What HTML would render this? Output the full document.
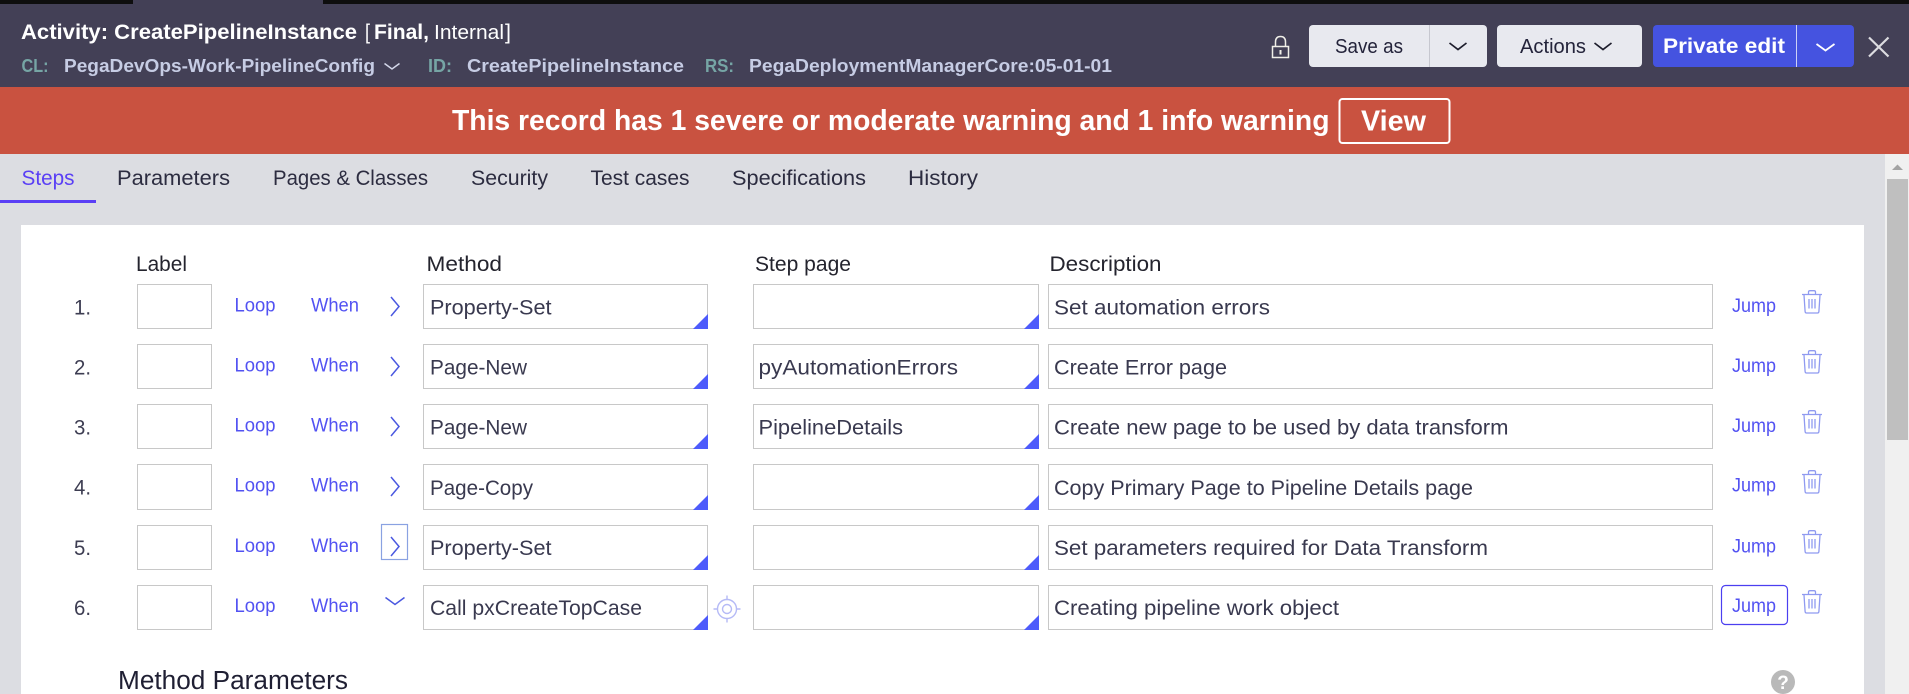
<!DOCTYPE html>
<html lang="en">
<head>
<meta charset="utf-8">
<title>Activity: CreatePipelineInstance</title>
<style>
html,body{margin:0;padding:0;width:1909px;height:694px;overflow:hidden;background:#dcdde2}
svg{display:block}
text{font-family:"Liberation Sans",sans-serif;white-space:pre}
.th{font-size:21px;font-weight:700;fill:#fff}
.sub{font-size:18px;font-weight:700;fill:#c6cce4}
.cl{font-size:18px;font-weight:700;fill:#76a5a5}
.btn{font-size:20.5px;fill:#23233a}
.tab{font-size:21.5px;fill:#2c2c40}
.hd{font-size:21px;fill:#24242e}
.num{font-size:21px;fill:#3d3d52}
.lnk{font-size:19px;fill:#5252f2}
.val{font-size:21px;fill:#39394f}
.box{fill:#fff;stroke:#c8c8c8;stroke-width:1}
.ch{fill:none;stroke:#4a58e0;stroke-width:1.5}
.tr{fill:none;stroke:#8f9af0;stroke-width:1.3}
</style>
</head>
<body>
<svg xmlns="http://www.w3.org/2000/svg" width="1909" height="694" viewBox="0 0 1909 694">
<defs>
<g id="tri"><path d="M0 15 L15 15 L15 0 Z" fill="#4d5bfb"/></g>
<g id="trash" class="tr">
<path d="M0.5 4.5 H20.5 M7 4 V2 Q7 0.7 8.5 0.7 H12.5 Q14 0.7 14 2 V4"/>
<path d="M2.5 5 L3.6 21.5 Q3.7 23 5 23 H16 Q17.3 23 17.4 21.5 L18.5 5"/>
<path d="M7.5 9 V18.5 M10.5 9 V18.5 M13.5 9 V18.5"/>
</g>
</defs>

<!-- top strip -->
<rect x="0" y="0" width="1909" height="87" fill="#434056"/>
<rect x="0" y="0" width="133" height="4" fill="#0e0e0e"/>
<rect x="323" y="0" width="1586" height="4" fill="#0e0e0e"/>

<!-- title -->
<text class="th" x="21" y="39" textLength="336" lengthAdjust="spacingAndGlyphs">Activity: CreatePipelineInstance</text>
<text x="365" y="39" font-size="21" fill="#fff" textLength="5" lengthAdjust="spacingAndGlyphs">[</text>
<text class="th" x="374" y="39" textLength="55" lengthAdjust="spacingAndGlyphs">Final,</text>
<text x="434" y="39" font-size="20" fill="#fff" textLength="70" lengthAdjust="spacingAndGlyphs">Internal</text>
<text x="505" y="39" font-size="21" fill="#fff" textLength="6" lengthAdjust="spacingAndGlyphs">]</text>

<text class="cl" x="21.5" y="72" textLength="27" lengthAdjust="spacingAndGlyphs">CL:</text>
<text class="sub" x="64" y="72" textLength="311" lengthAdjust="spacingAndGlyphs">PegaDevOps-Work-PipelineConfig</text>
<path d="M384.5 63.5 L392 69 L399.5 63.5" fill="none" stroke="#d4d8ea" stroke-width="1.5"/>
<text class="cl" x="428" y="72" textLength="24" lengthAdjust="spacingAndGlyphs">ID:</text>
<text class="sub" x="467" y="72" textLength="217" lengthAdjust="spacingAndGlyphs">CreatePipelineInstance</text>
<text class="cl" x="705" y="72" textLength="29" lengthAdjust="spacingAndGlyphs">RS:</text>
<text class="sub" x="749" y="72" textLength="363" lengthAdjust="spacingAndGlyphs">PegaDeploymentManagerCore:05-01-01</text>

<!-- lock -->
<rect x="1272.5" y="46.5" width="16" height="11" fill="none" stroke="#f0efe8" stroke-width="1.5"/>
<path d="M1275.5 46 V42 Q1275.5 36.5 1280.5 36.5 Q1285.5 36.5 1285.5 42 V46" fill="none" stroke="#f0efe8" stroke-width="1.5"/>
<rect x="1279.5" y="50" width="2" height="4.5" fill="#f0efe8"/>

<!-- buttons -->
<rect x="1309" y="25" width="178" height="42" rx="4" fill="#e8e9ef"/>
<rect x="1429" y="25" width="1" height="42" fill="#c6c7cf"/>
<text class="btn" x="1335" y="53" textLength="68" lengthAdjust="spacingAndGlyphs">Save as</text>
<path d="M1449.5 43 L1458 49.5 L1466.5 43" fill="none" stroke="#1d1d2c" stroke-width="1.7"/>
<rect x="1497" y="25" width="145" height="42" rx="4" fill="#e8e9ef"/>
<text class="btn" x="1520" y="53" textLength="66" lengthAdjust="spacingAndGlyphs">Actions</text>
<path d="M1594.5 43 L1603 49.5 L1611.5 43" fill="none" stroke="#1d1d2c" stroke-width="1.7"/>
<rect x="1653" y="25" width="201" height="42" rx="4" fill="#4553e0"/>
<rect x="1796" y="25" width="1" height="42" fill="#cdd1f5"/>
<text x="1663" y="53" font-size="21.5" font-weight="700" fill="#fff" textLength="122" lengthAdjust="spacingAndGlyphs">Private edit</text>
<path d="M1816.5 44 L1825.5 50.5 L1834.5 44" fill="none" stroke="#fff" stroke-width="1.8"/>
<path d="M1869 37.5 L1888.5 56.5 M1888.5 37.5 L1869 56.5" fill="none" stroke="#dcdce0" stroke-width="2.2"/>

<!-- warning -->
<rect x="0" y="87" width="1909" height="67" fill="#c95240"/>
<rect x="0" y="154" width="1909" height="540" fill="#dcdde2"/>
<text x="452" y="130" font-size="28.5" font-weight="700" fill="#fff" textLength="877.5" lengthAdjust="spacingAndGlyphs">This record has 1 severe or moderate warning and 1 info warning</text>
<rect x="1339.5" y="99" width="110" height="44" rx="3" fill="none" stroke="#fff" stroke-width="2"/>
<text x="1361" y="130.5" font-size="28.5" font-weight="700" fill="#fff" textLength="65" lengthAdjust="spacingAndGlyphs">View</text>

<!-- tabs -->
<text class="tab" x="21.5" y="185" style="fill:#5a3ff5" textLength="53" lengthAdjust="spacingAndGlyphs">Steps</text>
<rect x="0" y="200" width="96" height="3" fill="#5a3ff5"/>
<text class="tab" x="117" y="185" textLength="113" lengthAdjust="spacingAndGlyphs">Parameters</text>
<text class="tab" x="273" y="185" textLength="155" lengthAdjust="spacingAndGlyphs">Pages &amp; Classes</text>
<text class="tab" x="471" y="185" textLength="77" lengthAdjust="spacingAndGlyphs">Security</text>
<text class="tab" x="590.5" y="185" textLength="99" lengthAdjust="spacingAndGlyphs">Test cases</text>
<text class="tab" x="732" y="185" textLength="134" lengthAdjust="spacingAndGlyphs">Specifications</text>
<text class="tab" x="908" y="185" textLength="70" lengthAdjust="spacingAndGlyphs">History</text>

<!-- scrollbar -->
<rect x="1885" y="154" width="24" height="540" fill="#f0f0f0"/>
<path d="M1892 170 L1897.5 164.5 L1903 170 Z" fill="#a3a3a3"/>
<rect x="1887" y="179" width="21" height="261" fill="#bfbfbf"/>

<!-- panel -->
<rect x="21" y="225" width="1843" height="469" fill="#fff"/>

<!-- column headers -->
<text class="hd" x="136" y="271" textLength="51" lengthAdjust="spacingAndGlyphs">Label</text>
<text class="hd" x="426.5" y="271" textLength="75.5" lengthAdjust="spacingAndGlyphs">Method</text>
<text class="hd" x="755" y="271" textLength="96" lengthAdjust="spacingAndGlyphs">Step page</text>
<text class="hd" x="1049.5" y="271" textLength="112" lengthAdjust="spacingAndGlyphs">Description</text>

<!-- row 1 -->
<text class="num" x="74" y="314.5" textLength="17" lengthAdjust="spacingAndGlyphs">1.</text>
<rect class="box" x="137.5" y="284.5" width="74" height="44"/>
<text class="lnk" x="234.5" y="311.5" textLength="41" lengthAdjust="spacingAndGlyphs">Loop</text>
<text class="lnk" x="311" y="311.5" textLength="48" lengthAdjust="spacingAndGlyphs">When</text>
<path class="ch" d="M391 297 L399 306.5 L391 316"/>
<rect class="box" x="423.5" y="284.5" width="284" height="44"/>
<use href="#tri" x="693" y="314"/>
<text class="val" x="430" y="314.5" textLength="121.5" lengthAdjust="spacingAndGlyphs">Property-Set</text>
<rect class="box" x="753.5" y="284.5" width="285" height="44"/>
<use href="#tri" x="1024" y="314"/>
<rect class="box" x="1048.5" y="284.5" width="664" height="44"/>
<text class="val" x="1054" y="314.5" textLength="216" lengthAdjust="spacingAndGlyphs">Set automation errors</text>
<text class="lnk" x="1732" y="312" textLength="44" lengthAdjust="spacingAndGlyphs">Jump</text>
<use href="#trash" x="1801.5" y="290"/>

<!-- row 2 -->
<text class="num" x="74" y="374.5" textLength="17" lengthAdjust="spacingAndGlyphs">2.</text>
<rect class="box" x="137.5" y="344.5" width="74" height="44"/>
<text class="lnk" x="234.5" y="371.5" textLength="41" lengthAdjust="spacingAndGlyphs">Loop</text>
<text class="lnk" x="311" y="371.5" textLength="48" lengthAdjust="spacingAndGlyphs">When</text>
<path class="ch" d="M391 357 L399 366.5 L391 376"/>
<rect class="box" x="423.5" y="344.5" width="284" height="44"/>
<use href="#tri" x="693" y="374"/>
<text class="val" x="430" y="374.5" textLength="97" lengthAdjust="spacingAndGlyphs">Page-New</text>
<rect class="box" x="753.5" y="344.5" width="285" height="44"/>
<use href="#tri" x="1024" y="374"/>
<text class="val" x="758.5" y="374.5" textLength="199.5" lengthAdjust="spacingAndGlyphs">pyAutomationErrors</text>
<rect class="box" x="1048.5" y="344.5" width="664" height="44"/>
<text class="val" x="1054" y="374.5" textLength="173" lengthAdjust="spacingAndGlyphs">Create Error page</text>
<text class="lnk" x="1732" y="372" textLength="44" lengthAdjust="spacingAndGlyphs">Jump</text>
<use href="#trash" x="1801.5" y="350"/>

<!-- row 3 -->
<text class="num" x="74" y="434.5" textLength="17" lengthAdjust="spacingAndGlyphs">3.</text>
<rect class="box" x="137.5" y="404.5" width="74" height="44"/>
<text class="lnk" x="234.5" y="431.5" textLength="41" lengthAdjust="spacingAndGlyphs">Loop</text>
<text class="lnk" x="311" y="431.5" textLength="48" lengthAdjust="spacingAndGlyphs">When</text>
<path class="ch" d="M391 417 L399 426.5 L391 436"/>
<rect class="box" x="423.5" y="404.5" width="284" height="44"/>
<use href="#tri" x="693" y="434"/>
<text class="val" x="430" y="434.5" textLength="97" lengthAdjust="spacingAndGlyphs">Page-New</text>
<rect class="box" x="753.5" y="404.5" width="285" height="44"/>
<use href="#tri" x="1024" y="434"/>
<text class="val" x="758.5" y="434.5" textLength="144.5" lengthAdjust="spacingAndGlyphs">PipelineDetails</text>
<rect class="box" x="1048.5" y="404.5" width="664" height="44"/>
<text class="val" x="1054" y="434.5" textLength="454.5" lengthAdjust="spacingAndGlyphs">Create new page to be used by data transform</text>
<text class="lnk" x="1732" y="432" textLength="44" lengthAdjust="spacingAndGlyphs">Jump</text>
<use href="#trash" x="1801.5" y="410"/>

<!-- row 4 -->
<text class="num" x="74" y="494.5" textLength="17" lengthAdjust="spacingAndGlyphs">4.</text>
<rect class="box" x="137.5" y="464.5" width="74" height="45"/>
<text class="lnk" x="234.5" y="491.5" textLength="41" lengthAdjust="spacingAndGlyphs">Loop</text>
<text class="lnk" x="311" y="491.5" textLength="48" lengthAdjust="spacingAndGlyphs">When</text>
<path class="ch" d="M391 477 L399 486.5 L391 496"/>
<rect class="box" x="423.5" y="464.5" width="284" height="45"/>
<use href="#tri" x="693" y="495"/>
<text class="val" x="430" y="495" textLength="103" lengthAdjust="spacingAndGlyphs">Page-Copy</text>
<rect class="box" x="753.5" y="464.5" width="285" height="45"/>
<use href="#tri" x="1024" y="495"/>
<rect class="box" x="1048.5" y="464.5" width="664" height="45"/>
<text class="val" x="1054" y="495" textLength="419" lengthAdjust="spacingAndGlyphs">Copy Primary Page to Pipeline Details page</text>
<text class="lnk" x="1732" y="491.5" textLength="44" lengthAdjust="spacingAndGlyphs">Jump</text>
<use href="#trash" x="1801.5" y="470"/>

<!-- row 5 -->
<text class="num" x="74" y="555" textLength="17" lengthAdjust="spacingAndGlyphs">5.</text>
<rect class="box" x="137.5" y="525.5" width="74" height="44"/>
<text class="lnk" x="234.5" y="552" textLength="41" lengthAdjust="spacingAndGlyphs">Loop</text>
<text class="lnk" x="311" y="552" textLength="48" lengthAdjust="spacingAndGlyphs">When</text>
<rect x="381.5" y="524.5" width="26" height="35" fill="#fff" stroke="#8aa2e2" stroke-width="1.2"/>
<path class="ch" d="M391 537 L399 546.5 L391 556"/>
<rect class="box" x="423.5" y="525.5" width="284" height="44"/>
<use href="#tri" x="693" y="555"/>
<text class="val" x="430" y="555" textLength="121.5" lengthAdjust="spacingAndGlyphs">Property-Set</text>
<rect class="box" x="753.5" y="525.5" width="285" height="44"/>
<use href="#tri" x="1024" y="555"/>
<rect class="box" x="1048.5" y="525.5" width="664" height="44"/>
<text class="val" x="1054" y="555" textLength="434" lengthAdjust="spacingAndGlyphs">Set parameters required for Data Transform</text>
<text class="lnk" x="1732" y="552.5" textLength="44" lengthAdjust="spacingAndGlyphs">Jump</text>
<use href="#trash" x="1801.5" y="530"/>

<!-- row 6 -->
<text class="num" x="74" y="615" textLength="17" lengthAdjust="spacingAndGlyphs">6.</text>
<rect class="box" x="137.5" y="585.5" width="74" height="44"/>
<text class="lnk" x="234.5" y="612" textLength="41" lengthAdjust="spacingAndGlyphs">Loop</text>
<text class="lnk" x="311" y="612" textLength="48" lengthAdjust="spacingAndGlyphs">When</text>
<path class="ch" d="M385.5 597.5 L395 604.5 L404.5 597.5"/>
<rect class="box" x="423.5" y="585.5" width="284" height="44"/>
<use href="#tri" x="693" y="615"/>
<text class="val" x="430" y="615" textLength="212" lengthAdjust="spacingAndGlyphs">Call pxCreateTopCase</text>
<g fill="none" stroke="#b5baf6" stroke-width="1.4">
<circle cx="727" cy="609" r="9.5"/>
<circle cx="727" cy="609" r="4.5"/>
<path d="M727 595.5 V599.5 M727 618.5 V622.5 M713.5 609 H717.5 M736.5 609 H740.5"/>
</g>
<rect class="box" x="753.5" y="585.5" width="285" height="44"/>
<use href="#tri" x="1024" y="615"/>
<rect class="box" x="1048.5" y="585.5" width="664" height="44"/>
<text class="val" x="1054" y="615" textLength="285" lengthAdjust="spacingAndGlyphs">Creating pipeline work object</text>
<rect x="1721.5" y="585.5" width="66" height="39" rx="4" fill="#fff" stroke="#4b3ff0" stroke-width="1.2"/>
<text class="lnk" x="1732" y="612" textLength="44" lengthAdjust="spacingAndGlyphs">Jump</text>
<use href="#trash" x="1801.5" y="590"/>

<!-- method parameters -->
<text x="118" y="689" font-size="25.5" fill="#1f1f33" textLength="230" lengthAdjust="spacingAndGlyphs">Method Parameters</text>
<circle cx="1783" cy="682" r="12" fill="#b9b9b9"/>
<text x="1783" y="689" font-size="19" font-weight="700" fill="#fff" text-anchor="middle">?</text>
</svg>
</body>
</html>
